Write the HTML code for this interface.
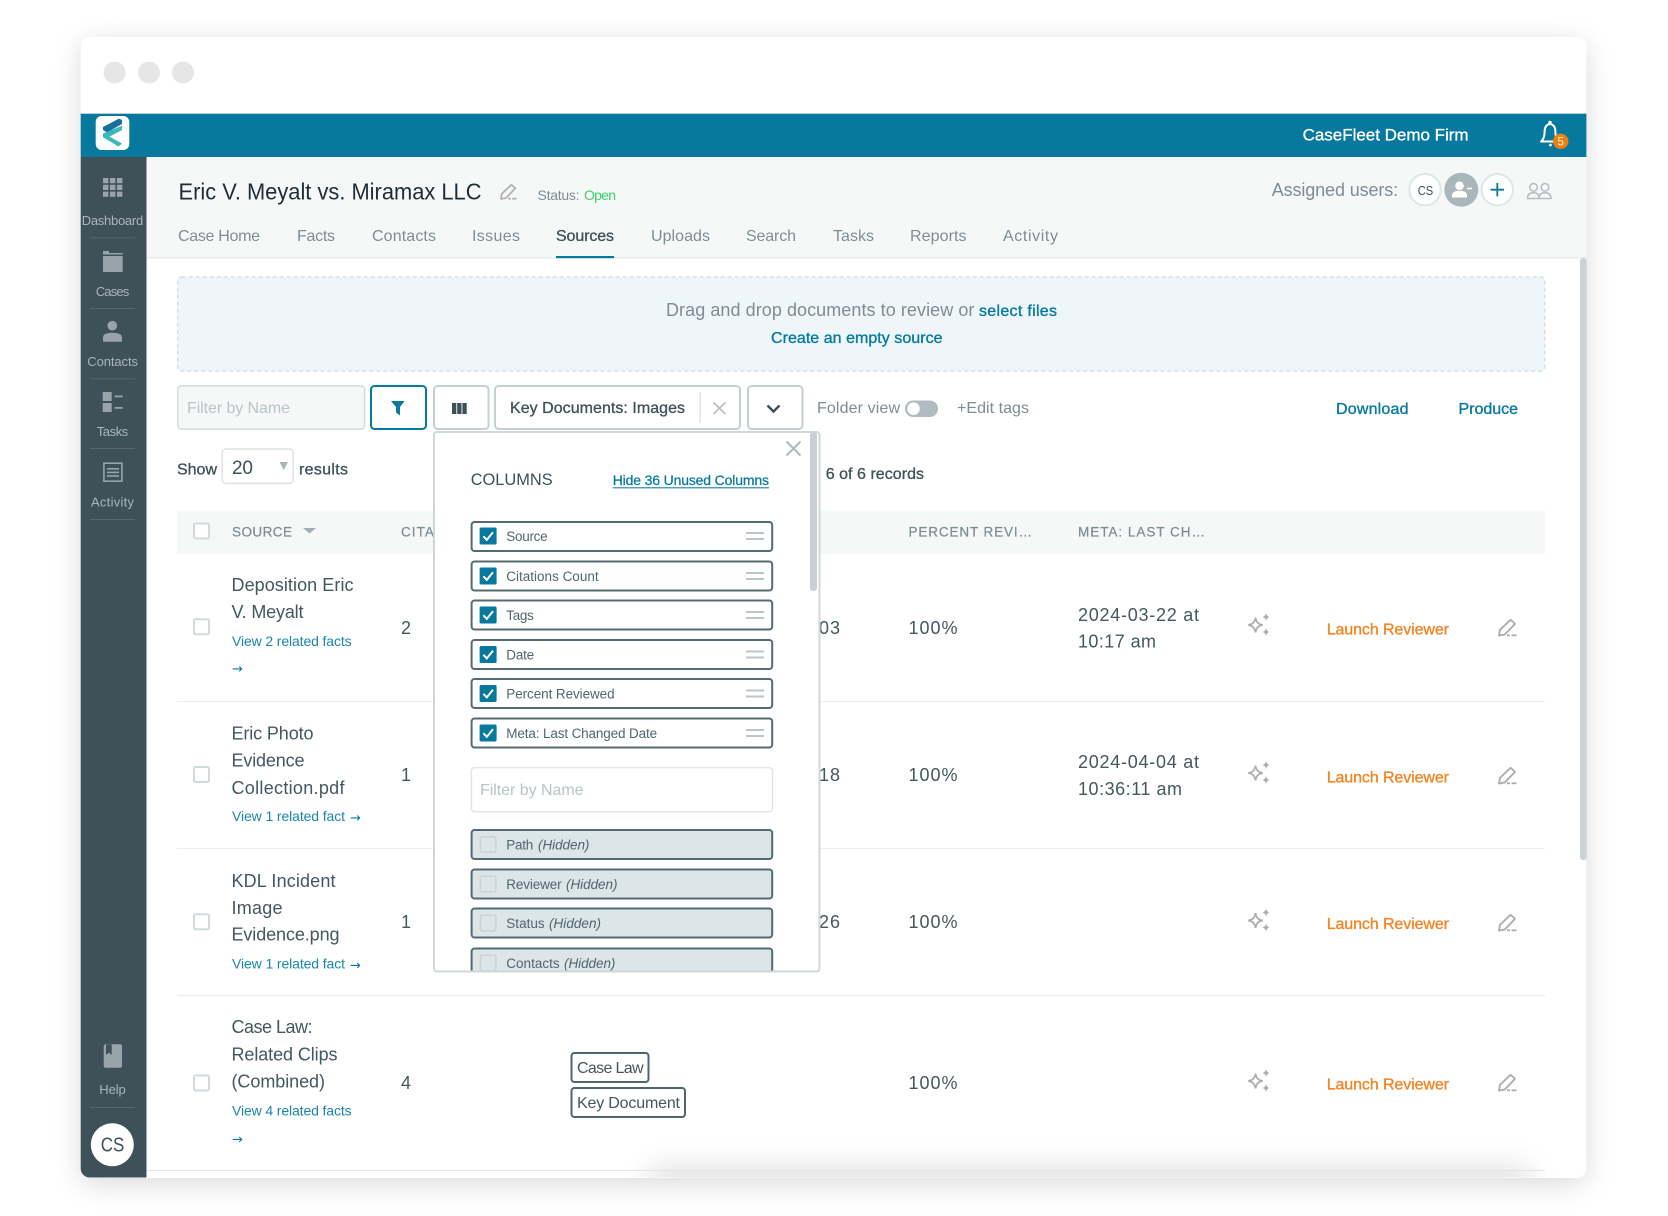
<!DOCTYPE html>
<html><head><meta charset="utf-8"><title>CaseFleet Sources</title>
<style>
html,body{margin:0;padding:0;background:#fff;width:1668px;height:1216px;overflow:hidden}
#sh{position:absolute;left:80.7px;top:37px;width:1505.7px;height:1140.5px;border-radius:9px;background:#fff;box-shadow:0 6px 28px rgba(0,0,0,.15)}
svg{position:absolute;left:0;top:0;filter:blur(.35px)}
text{font-family:"Liberation Sans",sans-serif;white-space:pre}
.side{font-size:13px;fill:#aab6ba}
.tab{font-size:16px;fill:#7d8d94}
.b{font-size:18px;fill:#44575f}
.l{font-size:14px;fill:#1a86a8}
.ar{font-family:"DejaVu Sans",sans-serif;font-size:13px;fill:#07799f}
.o{font-size:16px;fill:#f58220;stroke:#f58220;stroke-width:.3}
.th{font-size:13.5px;fill:#7d8d94;stroke:#7d8d94;stroke-width:.25}
.i{font-size:13.5px;fill:#50656e}
.it{font-style:italic}
.m{stroke-width:.35}
.teal{fill:#07799f;stroke:#07799f}
.ph{font-size:16px;fill:#b8c4c8}
.g{font-size:16px;fill:#7d8d94}
.dk{fill:#3e5058;stroke:#3e5058}
</style></head><body>
<div id="sh"></div>
<svg width="1668" height="1216" viewBox="0 0 1668 1216" xmlns="http://www.w3.org/2000/svg">
<defs>
<clipPath id="card"><rect x="80.7" y="37" width="1505.7" height="1140.5" rx="9"/></clipPath>
<clipPath id="pop"><rect x="434" y="432" width="385" height="538.5"/></clipPath>
<filter id="bl" filterUnits="userSpaceOnUse" x="560" y="1060" width="1060" height="200"><feGaussianBlur stdDeviation="16"/></filter>
<g id="sp">
<path d="M0-7.4C.8-2.8 2.8-.8 7.2 0 2.8.8.8 2.8 0 7.4-.8 2.8-2.8.8-7.2 0-2.8-.8-.8-2.8 0-7.4Z" fill="none" stroke="#aeaeae" stroke-width="1.8"/>
<path d="M10.5-12.2Q11-8.6 14.2-8 11-7.4 10.5-3.8 10-7.4 6.8-8 10-8.6 10.5-12.2Z" fill="#aeaeae"/>
<path d="M10.5 2.8Q11 6.4 14.2 7 11 7.6 10.5 11.2 10 7.6 6.8 7 10 6.4 10.5 2.8Z" fill="#aeaeae"/>
</g>
<g id="pn">
<path d="M1 16.5L2 10.8 12.6 .8 17 4.8 6.6 15.6Z" fill="none" stroke="#aeaeae" stroke-width="1.9" stroke-linejoin="round"/>
<rect x="9" y="15.4" width="3" height="1.8" fill="#aeaeae"/><rect x="13.5" y="15.4" width="5" height="1.8" fill="#aeaeae"/>
</g>
<g id="cb"><rect x="0" y="0" width="17" height="17" rx="1.5" fill="#07799f"/><path d="M3.8 8.8L7.2 12.4 13.4 4.8" fill="none" stroke="#fff" stroke-width="2"/></g>
<g id="hb"><rect x=".8" y=".8" width="15.4" height="15.4" rx="1.5" fill="#dce5e7" stroke="#c9d3d6" stroke-width="1.5"/></g>
<g id="ck"><rect x="1" y="1" width="15" height="15" rx="1.5" fill="#fff" stroke="#d3dadd" stroke-width="2"/></g>
<g id="dr"><rect x="0" y="-4" width="18" height="2" fill="#bcc5c9"/><rect x="0" y="2" width="18" height="2" fill="#bcc5c9"/></g>
</defs>

<g clip-path="url(#card)">
<rect x="80" y="37" width="1507" height="1141" fill="#fff"/>
<circle cx="114.6" cy="72.5" r="11" fill="#e6e6e6"/><circle cx="149" cy="72.5" r="11" fill="#e6e6e6"/><circle cx="183" cy="72.5" r="11" fill="#e6e6e6"/>

<!-- subheader -->
<rect x="146" y="157" width="1441" height="101" fill="#f6f8f8"/>
<rect x="146" y="257" width="1441" height="1.5" fill="#e8ecee"/>

<!-- top bar -->
<rect x="80" y="113" width="1507" height="44" fill="#07799f"/>
<rect x="80" y="113" width="1507" height="1" fill="#b8cdd6"/>
<!-- sidebar -->
<rect x="80" y="157" width="66.5" height="1021" fill="#3e5058"/>

<!-- bottom blurred shadow -->
<rect x="650" y="1168" width="880" height="40" fill="#000" opacity=".13" filter="url(#bl)"/>
<rect x="146.5" y="1170" width="1398.5" height="1" fill="#dfe5e8"/>
</g>

<!-- logo -->
<rect x="95.7" y="116" width="33.6" height="34" rx="6" fill="#fff"/>
<path d="M103 127L119 118.6 122 120 122 124 107 132.5 103 130Z" fill="#1a6f9e"/>
<path d="M122 125.8V130L109.5 136.6 122 143.5 118.5 146.5 103 137.2V133.5Z" fill="#3ab8bb"/>

<!-- top bar text -->
<text x="1302.6" y="140.7" font-size="17" fill="#fff" stroke="#fff" stroke-width=".3" textLength="166">CaseFleet Demo Firm</text>
<path d="M1541 141.5C1544 139 1544.6 136 1544.6 132 1544.6 127 1546.5 124.4 1550 124 1553.5 124.4 1555.4 127 1555.4 132 1555.4 136 1556 139 1559 141.5Z" fill="none" stroke="#fff" stroke-width="2" stroke-linejoin="round"/>
<circle cx="1550" cy="122.5" r="1.8" fill="#fff"/>
<circle cx="1550.5" cy="145" r="1.4" fill="#fff"/>
<circle cx="1560.7" cy="141.3" r="7.7" fill="#ee7f12"/>
<text x="1557.5" y="145.3" font-size="11.5" fill="#fde9d0">5</text>

<!-- sidebar icons -->
<g fill="#98a4a9">
<rect x="103" y="178" width="5.4" height="5.2"/><rect x="110" y="178" width="5.4" height="5.2"/><rect x="117" y="178" width="5.4" height="5.2"/>
<rect x="103" y="184.8" width="5.4" height="5.2"/><rect x="110" y="184.8" width="5.4" height="5.2"/><rect x="117" y="184.8" width="5.4" height="5.2"/>
<rect x="103" y="191.6" width="5.4" height="5.2"/><rect x="110" y="191.6" width="5.4" height="5.2"/><rect x="117" y="191.6" width="5.4" height="5.2"/>
<path d="M103 251H108.5L109.5 253H122.7V254.5H103Z"/><rect x="103" y="256" width="19.7" height="16"/>
<circle cx="112.3" cy="325.7" r="4.8"/><path d="M103 341.7V337.5C103 334.5 106 332.8 112.3 332.8S122 334.5 122 337.5V341.7Z"/>
<rect x="102.7" y="392" width="9" height="9"/><rect x="102.7" y="403" width="9" height="9"/>
<rect x="114.7" y="395.5" width="8" height="1.8"/><rect x="114.7" y="407" width="8" height="1.8"/>
<rect x="107" y="468" width="12" height="1.6"/><rect x="107" y="471.6" width="12" height="1.6"/><rect x="107" y="475.2" width="12" height="1.6"/>
<path d="M103.7 1046.3Q103.7 1044.3 105.7 1044.3H120Q122 1044.3 122 1046.3V1065.7Q122 1067.7 120 1067.7H105.7Q103.7 1067.7 103.7 1065.7Z"/>
</g>
<rect x="103.9" y="463.2" width="18" height="18" fill="none" stroke="#98a4a9" stroke-width="1.6"/>
<path d="M106 1044.5H111.7V1055L108.8 1052.6 106 1055Z" fill="#3e5058"/>

<text class="side" x="81.7" y="225" textLength="61.5">Dashboard</text>
<text class="side" x="95.7" y="296" textLength="33.6">Cases</text>
<text class="side" x="87.3" y="366" textLength="50.7">Contacts</text>
<text class="side" x="96.7" y="436" textLength="31.6">Tasks</text>
<text class="side" x="91" y="506.7" textLength="43">Activity</text>
<text class="side" x="99.3" y="1094" textLength="26.4">Help</text>
<g fill="#56676e">
<rect x="90" y="237.3" width="45" height="1"/><rect x="90" y="308" width="45" height="1"/><rect x="90" y="378.3" width="45" height="1"/><rect x="90" y="448" width="45" height="1"/><rect x="90" y="519" width="45" height="1"/><rect x="90" y="1107" width="45" height="1"/>
</g>
<circle cx="112.3" cy="1144.7" r="21.5" fill="#fff"/>
<text x="100.7" y="1151.7" font-size="20" fill="#3e5058" textLength="23.6" lengthAdjust="spacingAndGlyphs">CS</text>

<!-- title -->
<text x="178.5" y="199.3" font-size="23" fill="#1e2d35" textLength="303" lengthAdjust="spacingAndGlyphs">Eric V. Meyalt vs. Miramax LLC</text>
<use href="#pn" transform="translate(500 184) scale(.9)"/>
<text x="537.5" y="200" font-size="14" fill="#7d8d94" textLength="42">Status:</text>
<text x="584" y="200" font-size="14" fill="#3fcf6a" textLength="32">Open</text>

<!-- assigned users -->
<text x="1271.7" y="196" font-size="18" fill="#7d8d94" textLength="126.5">Assigned users:</text>
<circle cx="1425" cy="189.7" r="15.7" fill="#fff" stroke="#dde6e9" stroke-width="2"/>
<text x="1417.7" y="195" font-size="13" fill="#3e5058" textLength="15.5" lengthAdjust="spacingAndGlyphs">CS</text>
<circle cx="1461.3" cy="189.7" r="17" fill="#a9b7bb"/>
<circle cx="1459.5" cy="185.8" r="4.3" fill="#fff"/>
<path d="M1452 197.5V195C1452 192.4 1455 190.8 1459.5 190.8S1467 192.4 1467 195V197.5Z" fill="#fff"/>
<rect x="1467" y="187.7" width="5" height="1.6" fill="#fff"/>
<circle cx="1497.3" cy="189.7" r="15.7" fill="#fff" stroke="#dde6e9" stroke-width="2"/>
<path d="M1497.3 183V196.4M1490.6 189.7H1504" stroke="#07799f" stroke-width="1.8" fill="none"/>
<g fill="none" stroke="#b5bcbf" stroke-width="1.5">
<circle cx="1533.5" cy="187.3" r="3.8"/><circle cx="1545" cy="187.3" r="3.8"/>
<path d="M1527.5 198.5C1527.5 194.5 1530 192.8 1533.5 192.8S1539.2 194.5 1539.2 198.5ZM1539.2 198.5C1539.2 194.5 1541.5 192.8 1545 192.8S1551 194.5 1551 198.5Z"/>
</g>

<!-- tabs -->
<text class="tab" x="178" y="241" textLength="82">Case Home</text>
<text class="tab" x="297" y="241" textLength="38">Facts</text>
<text class="tab" x="372" y="241" textLength="64">Contacts</text>
<text class="tab" x="472" y="241" textLength="48">Issues</text>
<text class="tab dk" x="556" y="241" stroke-width=".3" textLength="58">Sources</text>
<text class="tab" x="651" y="241" textLength="59">Uploads</text>
<text class="tab" x="746" y="241" textLength="50">Search</text>
<text class="tab" x="833" y="241" textLength="41">Tasks</text>
<text class="tab" x="910" y="241" textLength="56.5">Reports</text>
<text class="tab" x="1003" y="241" textLength="55">Activity</text>
<rect x="556" y="256" width="58" height="2.2" fill="#07799f"/>

<!-- scrollbar -->
<rect x="1580" y="258" width="6.7" height="602" rx="3" fill="#ccd3d7"/>

<!-- drop zone -->
<rect x="177.7" y="277" width="1367" height="94" rx="4" fill="#eef6fa" stroke="#d5e0e4" stroke-width="1.6" stroke-dasharray="4 3"/>
<text x="666" y="316" font-size="18" fill="#7d8d94" textLength="308.4">Drag and drop documents to review or</text>
<text class="teal m" x="979" y="316" font-size="16" textLength="78">select files</text>
<text class="teal m" x="771" y="343" font-size="16" textLength="171.5">Create an empty source</text>

<!-- toolbar -->
<rect x="177.7" y="385.7" width="187" height="43.6" rx="4" fill="#f6f8f8" stroke="#d3dcdf" stroke-width="1.5"/>
<text class="ph" x="187" y="413" textLength="103">Filter by Name</text>
<rect x="371" y="386" width="55" height="43" rx="3.5" fill="#fff" stroke="#07799f" stroke-width="2"/>
<path d="M391 401H404.5L400 407V415.5L396 412.5V407Z" fill="#07799f"/>
<rect x="434" y="386" width="54.5" height="43" rx="3.5" fill="#fff" stroke="#c6d0d3" stroke-width="2"/>
<rect x="452" y="403" width="4.3" height="11" fill="#3e5058"/><rect x="457.2" y="403" width="4.3" height="11" fill="#3e5058"/><rect x="462.4" y="403" width="4.3" height="11" fill="#3e5058"/>
<rect x="495" y="386" width="245" height="43" rx="3.5" fill="#fff" stroke="#c6d0d3" stroke-width="2"/>
<text class="dk" x="510" y="413" font-size="16" stroke-width=".3" textLength="175">Key Documents: Images</text>
<rect x="699.5" y="392" width="1.5" height="31" fill="#dfe5e7"/>
<path d="M713.5 402.5L725.5 414M725.5 402.5L713.5 414" stroke="#b5bfc3" stroke-width="1.6" fill="none"/>
<rect x="748" y="386" width="54.5" height="43" rx="3.5" fill="#fff" stroke="#c6d0d3" stroke-width="2"/>
<path d="M767.5 405.5L773.5 411.5 779.5 405.5" stroke="#3e5058" stroke-width="2.4" fill="none"/>
<text class="g" x="817" y="413" textLength="83">Folder view</text>
<rect x="905" y="400.5" width="33" height="16.5" rx="8.2" fill="#b0bcc0"/>
<circle cx="913.5" cy="408.7" r="6.3" fill="#fff"/>
<text class="g" x="957" y="413" textLength="72">+Edit tags</text>
<text class="teal m" x="1336" y="414" font-size="16" textLength="72.5">Download</text>
<text class="teal m" x="1458.5" y="414" font-size="16" textLength="59.5">Produce</text>

<!-- show -->
<text class="dk" x="177" y="474.3" font-size="16" stroke-width=".3" textLength="40">Show</text>
<rect x="222.2" y="449" width="71" height="34.5" rx="4" fill="#fff" stroke="#dbe2e5" stroke-width="1.4"/>
<text x="232" y="474" font-size="19" fill="#3e5058" textLength="21">20</text>
<path d="M279.5 462H288L283.7 470Z" fill="#a9b5ba"/>
<text class="dk" x="299" y="474.3" font-size="16" stroke-width=".3" textLength="49">results</text>
<text class="dk" x="825.7" y="479" font-size="16" stroke-width=".3" textLength="98.3">6 of 6 records</text>

<!-- table head -->
<rect x="177" y="510.7" width="1368" height="43.5" fill="#f6f8f8"/>
<use href="#ck" x="193" y="522.5"/>
<text class="th" x="232" y="536.7" textLength="60">SOURCE</text>
<path d="M303 528H316L309.5 533.5Z" fill="#a3afb4"/>
<text class="th" x="401" y="536.7" textLength="46">CITATI</text>
<text class="th" x="908.5" y="536.7" textLength="123.5">PERCENT REVI…</text>
<text class="th" x="1078" y="536.7" textLength="127">META: LAST CH…</text>

<!-- dividers -->
<g fill="#e8eef1"><rect x="177" y="701" width="1368" height="1"/><rect x="177" y="848" width="1368" height="1"/><rect x="177" y="995" width="1368" height="1.2"/></g>

<!-- row 1 -->
<use href="#ck" x="193" y="618.3"/>
<text class="b" x="231.5" y="591" textLength="122">Deposition Eric</text>
<text class="b" x="231.5" y="617.8" textLength="72">V. Meyalt</text>
<text class="l" x="232" y="646" textLength="119.6">View 2 related facts</text>
<text class="ar" x="232" y="673" textLength="12">→</text>
<text class="b" x="401" y="634">2</text>
<text class="b" x="819" y="634" textLength="21">03</text>
<text class="b" x="908.5" y="634" textLength="49">100%</text>
<text class="b" x="1078" y="621" textLength="121">2024-03-22 at</text>
<text class="b" x="1078" y="647.5" textLength="78">10:17 am</text>
<use href="#sp" x="1255.5" y="625"/>
<text class="o" x="1326.7" y="634.3" textLength="122.3">Launch Reviewer</text>
<use href="#pn" x="1498" y="619"/>

<!-- row 2 -->
<use href="#ck" x="193" y="766"/>
<text class="b" x="231.5" y="739.6" textLength="82">Eric Photo</text>
<text class="b" x="231.5" y="766.5" textLength="73">Evidence</text>
<text class="b" x="231.5" y="794" textLength="113">Collection.pdf</text>
<text class="l" x="232" y="821" textLength="113">View 1 related fact</text>
<text class="ar" x="350" y="822" textLength="12">→</text>
<text class="b" x="401" y="781">1</text>
<text class="b" x="819" y="781" textLength="21">18</text>
<text class="b" x="908.5" y="781" textLength="49">100%</text>
<text class="b" x="1078" y="768" textLength="121">2024-04-04 at</text>
<text class="b" x="1078" y="795" textLength="104">10:36:11 am</text>
<use href="#sp" x="1255.5" y="773"/>
<text class="o" x="1326.7" y="782.3" textLength="122.3">Launch Reviewer</text>
<use href="#pn" x="1498" y="767"/>

<!-- row 3 -->
<use href="#ck" x="193" y="913.3"/>
<text class="b" x="231.5" y="887" textLength="104">KDL Incident</text>
<text class="b" x="231.5" y="914" textLength="51">Image</text>
<text class="b" x="231.5" y="940.5" textLength="108">Evidence.png</text>
<text class="l" x="232" y="968.6" textLength="113">View 1 related fact</text>
<text class="ar" x="350" y="969.6" textLength="12">→</text>
<text class="b" x="401" y="928">1</text>
<text class="b" x="819" y="928" textLength="21">26</text>
<text class="b" x="908.5" y="928" textLength="49">100%</text>
<use href="#sp" x="1255.5" y="920.5"/>
<text class="o" x="1326.7" y="929" textLength="122.3">Launch Reviewer</text>
<use href="#pn" x="1498" y="914"/>

<!-- row 4 -->
<use href="#ck" x="193" y="1074.5"/>
<text class="b" x="231.5" y="1033" textLength="81">Case Law:</text>
<text class="b" x="231.5" y="1060.5" textLength="106">Related Clips</text>
<text class="b" x="231.5" y="1087.5" textLength="93.5">(Combined)</text>
<text class="l" x="232" y="1115.6" textLength="119.6">View 4 related facts</text>
<text class="ar" x="232" y="1143.5" textLength="12">→</text>
<text class="b" x="401" y="1089">4</text>
<rect x="571.5" y="1053" width="77" height="29" rx="3" fill="#fff" stroke="#50656e" stroke-width="2"/>
<text x="577" y="1073" font-size="16" fill="#44575f" textLength="66.6">Case Law</text>
<rect x="571.5" y="1088" width="113.5" height="29" rx="3" fill="#fff" stroke="#50656e" stroke-width="2"/>
<text x="577" y="1108" font-size="16" fill="#44575f" textLength="103">Key Document</text>
<text class="b" x="908.5" y="1089" textLength="49">100%</text>
<use href="#sp" x="1255.5" y="1081"/>
<text class="o" x="1326.7" y="1089.6" textLength="122.3">Launch Reviewer</text>
<use href="#pn" x="1498" y="1074"/>

<!-- popover -->
<rect x="434" y="432" width="385.5" height="539.5" rx="3" fill="#fff" stroke="#cfd7da" stroke-width="2"/>
<rect x="810" y="432" width="7" height="159" rx="3" fill="#c9d0d4"/>
<path d="M786.5 441.5L800.5 455.5M800.5 441.5L786.5 455.5" stroke="#b0b8bb" stroke-width="2" fill="none"/>
<text x="470.7" y="485" font-size="17" fill="#3e5058" textLength="82" lengthAdjust="spacingAndGlyphs">COLUMNS</text>
<text class="teal" x="612.7" y="485" font-size="14" stroke-width=".25" textLength="156.3">Hide 36 Unused Columns</text>
<rect x="612.7" y="487.3" width="156.3" height="1" fill="#07799f"/>

<g fill="#fff" stroke="#556a73" stroke-width="2">
<rect x="471.6" y="522" width="300.6" height="29" rx="3"/>
<rect x="471.6" y="561.5" width="300.6" height="29" rx="3"/>
<rect x="471.6" y="600.5" width="300.6" height="29" rx="3"/>
<rect x="471.6" y="640" width="300.6" height="29" rx="3"/>
<rect x="471.6" y="679" width="300.6" height="29" rx="3"/>
<rect x="471.6" y="718.5" width="300.6" height="29" rx="3"/>
</g>
<use href="#cb" x="479.6" y="527.5"/><use href="#cb" x="479.6" y="567.5"/><use href="#cb" x="479.6" y="606.5"/><use href="#cb" x="479.6" y="646"/><use href="#cb" x="479.6" y="685"/><use href="#cb" x="479.6" y="724.5"/>
<use href="#dr" x="746" y="536"/><use href="#dr" x="746" y="576"/><use href="#dr" x="746" y="615"/><use href="#dr" x="746" y="654.5"/><use href="#dr" x="746" y="693.5"/><use href="#dr" x="746" y="733"/>
<text class="i" x="506.3" y="541" textLength="41.3">Source</text>
<text class="i" x="506.3" y="581" textLength="92.3">Citations Count</text>
<text class="i" x="506.3" y="620" textLength="27.5">Tags</text>
<text class="i" x="506.3" y="659.5" textLength="27.9">Date</text>
<text class="i" x="506.3" y="698.5" textLength="108.3">Percent Reviewed</text>
<text class="i" x="506.3" y="738" textLength="150.8">Meta: Last Changed Date</text>

<rect x="471.4" y="767.7" width="301" height="44" rx="3" fill="#fff" stroke="#dfe5e7" stroke-width="1.4"/>
<text class="ph" x="480" y="795" textLength="103.5">Filter by Name</text>

<g clip-path="url(#pop)">
<g fill="#dce5e7" stroke="#556a73" stroke-width="2">
<rect x="471.6" y="830" width="300.6" height="29" rx="3"/>
<rect x="471.6" y="869.5" width="300.6" height="29" rx="3"/>
<rect x="471.6" y="908.5" width="300.6" height="29" rx="3"/>
<rect x="471.6" y="948.5" width="300.6" height="29" rx="3"/>
</g>
<use href="#hb" x="479.6" y="836"/><use href="#hb" x="479.6" y="875.5"/><use href="#hb" x="479.6" y="914.5"/><use href="#hb" x="479.6" y="954.5"/>
<text class="i" x="506.3" y="849.5" textLength="27">Path</text><text class="i it" x="538" y="849.5" textLength="51.4">(Hidden)</text>
<text class="i" x="506.3" y="889" textLength="55.3">Reviewer</text><text class="i it" x="566" y="889" textLength="51.5">(Hidden)</text>
<text class="i" x="506.3" y="928" textLength="38.3">Status</text><text class="i it" x="549" y="928" textLength="52">(Hidden)</text>
<text class="i" x="506.3" y="968" textLength="53.3">Contacts</text><text class="i it" x="564" y="968" textLength="51.4">(Hidden)</text>
</g>
</svg>
</body></html>
